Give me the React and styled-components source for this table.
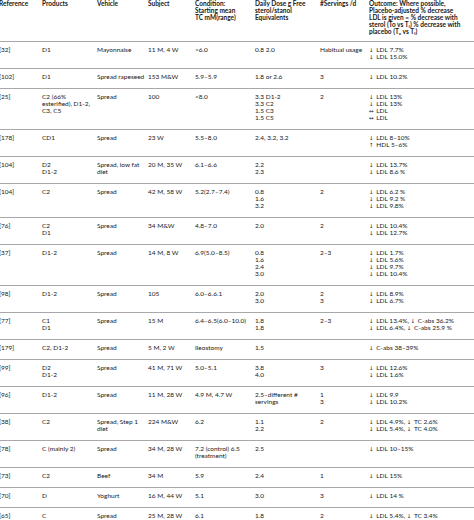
import React from "react";
import styled, { createGlobalStyle } from "styled-components";

const GlobalStyle = createGlobalStyle`
  html, body {
    margin: 0;
    padding: 0;
    background: #fff;
    overflow: hidden;
  }
  body {
    font-family: "Lato", "DejaVu Sans", sans-serif;
    color: #181818;
  }
`;

const Table = styled.div`
  width: 520px;
  margin-left: -1px;
`;

const Row = styled.div`
  display: grid;
  grid-template-columns: 43px 55px 51px 47px 60px 65px 49px 150px;
  padding: ${(p) => (p.$head ? "0 0 6px" : "4px 0 8px")};
  border-bottom: 1px solid #a8a8a8;
`;

const Cell = styled.div`
  font-size: 6.5px;
  line-height: 7px;
  font-weight: ${(p) => (p.$head ? 700 : 400)};
  white-space: nowrap;

  sub {
    font-size: 4px;
    line-height: 0;
    vertical-align: -0.5px;
  }
`;

const Line = styled.div`
  height: 7px;
  overflow: visible;
`;

const Arrow = styled.span`
  font-family: "DejaVu Sans", sans-serif;
  font-size: 5.5px;
  margin-right: 1px;
`;

const down = <Arrow>↓</Arrow>;
const up = <Arrow>↑</Arrow>;
const both = <Arrow>↔</Arrow>;

const ldl = (v) => (
  <>
    {down} LDL {v}
  </>
);

const rows = [
  [["[32]"], ["D1"], ["Mayonnaise"], ["11 M, 4 W"], [">6.0"], ["0.8 2.0"], ["Habitual usage"], [ldl("7.7%"), ldl("15.0%")]],
  [["[102]"], ["D1"], ["Spread rapeseed"], ["153 M&W"], ["5.9–5.9"], ["1.8 or 2.6"], ["3"], [ldl("10.2%")]],
  [
    ["[25]"],
    ["C2 (66%", "esterified), D1-2,", "C3, C5"],
    ["Spread"],
    ["100"],
    ["<8.0"],
    ["3.3 D1-2", "3.3 C2", "1.5 C3", "1.5 C5"],
    ["2"],
    [ldl("13%"), ldl("13%"), <>{both} LDL</>, <>{both} LDL</>],
  ],
  [["[178]"], ["CD1"], ["Spread"], ["23 W"], ["5.5–8.0"], ["2.4, 3.2, 3.2"], [""], [ldl("8–10%"), <>{up} HDL 5–6%</>]],
  [["[104]"], ["D2", "D1-2"], ["Spread, low fat", "diet"], ["20 M, 35 W"], ["6.1–6.6"], ["2.2", "2.3"], [""], [ldl("13.7%"), ldl("8.6 %")]],
  [["[104]"], ["C2"], ["Spread"], ["42 M, 58 W"], ["5.2(2.7–7.4)"], ["0.8", "1.6", "3.2"], ["2"], [ldl("6.2 %"), ldl("9.2 %"), ldl("9.8%")]],
  [["[76]"], ["C2", "D1"], ["Spread"], ["34 M&W"], ["4.8–7.0"], ["2.0"], ["2"], [ldl("10.4%"), ldl("12.7%")]],
  [
    ["[37]"],
    ["D1-2"],
    ["Spread"],
    ["14 M, 8 W"],
    ["6.9(5.0–8.5)"],
    ["0.8", "1.6", "2.4", "3.0"],
    ["2–3"],
    [ldl("1.7%"), ldl("5.6%"), ldl("9.7%"), ldl("10.4%")],
  ],
  [["[98]"], ["D1-2"], ["Spread"], ["105"], ["6.0–6.6.1"], ["2.0", "3.0"], ["2", "3"], [ldl("8.9%"), ldl("6.7%")]],
  [
    ["[77]"],
    ["C1", "D1"],
    ["Spread"],
    ["15 M"],
    ["6.4–6.5(6.0–10.0)"],
    ["1.8", "1.8"],
    ["2–3"],
    [<>{down} LDL 13.4%, {down} C-abs 36.2%</>, <>{down} LDL 6.4%, {down} C-abs 25.9 %</>],
  ],
  [["[179]"], ["C2, D1-2"], ["Spread"], ["5 M, 2 W"], ["Ileostomy"], ["1.5"], [""], [<>{down} C-abs 38–39%</>]],
  [["[99]"], ["D2", "D1-2"], ["Spread"], ["41 M, 71 W"], ["5.0–5.1"], ["3.8", "4.0"], ["3"], [ldl("12.6%"), ldl("1.6%")]],
  [["[96]"], ["D1-2"], ["Spread"], ["11 M, 28 W"], ["4.9 M, 4.7 W"], ["2.5–different #", "servings"], ["1", "3"], [ldl("9.9"), ldl("10.2%")]],
  [
    ["[38]"],
    ["C2"],
    ["Spread, Step 1", "diet"],
    ["224 M&W"],
    ["6.2"],
    ["1.1", "2.2"],
    ["2"],
    [<>{down} LDL 4.9%, {down} TC 2.6%</>, <>{down} LDL 5.4%, {down} TC 4.0%</>],
  ],
  [["[78]"], ["C (mainly 2)"], ["Spread"], ["34 M, 28 W"], ["7.2 (control) 6.5", "(treatment)"], ["2.5"], [""], [ldl("10–15%")]],
  [["[73]"], ["C2"], ["Beef"], ["34 M"], ["5.9"], ["2.4"], ["1"], [ldl("15%")]],
  [["[70]"], ["D"], ["Yoghurt"], ["16 M, 44 W"], ["5.1"], ["3.0"], ["3"], [ldl("14 %")]],
  [["[65]"], ["C"], ["Spread"], ["25 M, 28 W"], ["6.1"], ["1.8"], ["2"], [<>{down} LDL 5.4%, {down} TC 3.4%</>]],
];

const header = [
  ["Reference"],
  ["Products"],
  ["Vehicle"],
  ["Subject"],
  ["Condition:", "Starting mean", "TC mM(range)"],
  ["Daily Dose g Free", "sterol/stanol", "Equivalents"],
  ["#Servings /d"],
  [
    "Outcome: Where possible,",
    "Placebo-adjusted % decrease",
    "LDL is given = % decrease with",
    <>
      sterol (To vs T<sub>f</sub>) % decrease with
    </>,
    <>
      placebo (T<sub>o</sub> vs T<sub>f</sub>)
    </>,
  ],
];

export default function App() {
  return (
    <>
      <GlobalStyle />
      <Table>
        <Row $head>
          {header.map((lines, i) => (
            <Cell $head key={i}>
              {lines.map((l, j) => (
                <Line key={j}>{l}</Line>
              ))}
            </Cell>
          ))}
        </Row>
        {rows.map((row, r) => (
          <Row key={r}>
            {row.map((lines, i) => (
              <Cell key={i}>
                {lines.map((l, j) => (
                  <Line key={j}>{l}</Line>
                ))}
              </Cell>
            ))}
          </Row>
        ))}
      </Table>
    </>
  );
}
